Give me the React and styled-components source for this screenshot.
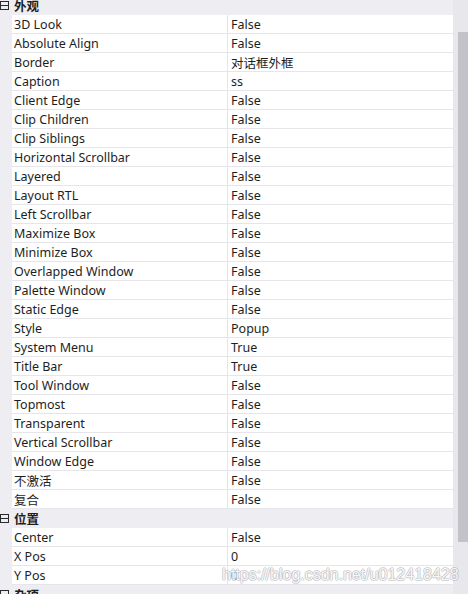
import React from 'react';
import styled, { createGlobalStyle } from 'styled-components';

const GlobalStyle = createGlobalStyle`
    html, body {
        margin: 0;
        padding: 0;
        background: #eeeef2;
        overflow: hidden;
    }
`;

const Frame = styled.div`
    display: flex;
    position: relative;
    width: 468px;
    height: 594px;
    overflow: hidden;
    background: #eeeef2;
    font-family: "Noto Sans", "Noto Sans CJK SC", sans-serif;
    font-size: 12.5px;
    color: #1e1e1e;
`;

const Grid = styled.div`
    flex: 1;
    display: flex;
    flex-direction: column;
    margin-top: -4px;
`;

const CategoryRow = styled.div`
    display: flex;
    align-items: center;
    height: 19px;
    flex: none;
    background: #eeeef2;
`;

const Expander = styled.div`
    display: flex;
    align-items: center;
    width: 14px;
    height: 19px;
`;

const CategoryLabel = styled.span`
    font-family: "Noto Sans CJK SC", sans-serif;
    font-weight: bold;
    font-size: 12.5px;
    line-height: 19px;
`;

const PropRow = styled.div`
    display: grid;
    grid-template-columns: 12px 216px 1fr;
    height: 19px;
    flex: none;
`;

const Margin = styled.div`
    background: #eeeef2;
`;

const Cell = styled.div`
    display: flex;
    align-items: center;
    height: 18px;
    padding-left: ${p => (p.$value ? '3px' : '2px')};
    background: #ffffff;
    border-bottom: 1px solid #e6e6ea;
    border-right: ${p => (p.$value ? 'none' : '1px solid #e6e6ea')};
    white-space: nowrap;
    overflow: hidden;
`;

const Scrollbar = styled.div`
    display: flex;
    justify-content: flex-end;
    width: 15px;
    padding-top: 32px;
    background: #e8e8ec;
`;

const Thumb = styled.div`
    width: 10px;
    height: 510px;
    background: #c2c3c9;
`;

const Watermark = styled.div`
    position: absolute;
    left: 222px;
    top: 566px;
    font-family: "Liberation Sans", Arial, sans-serif;
    font-size: 16px;
    color: rgba(255, 255, 255, 0.9);
    text-shadow:
        1px 0 0 rgba(160, 160, 165, 0.45),
        -1px 0 0 rgba(160, 160, 165, 0.45),
        0 1px 0 rgba(160, 160, 165, 0.45),
        0 -1px 0 rgba(160, 160, 165, 0.45);
    white-space: nowrap;
    pointer-events: none;
`;

const groups = [
    {
        title: '外观',
        props: [
            ['3D Look', 'False'],
            ['Absolute Align', 'False'],
            ['Border', '对话框外框'],
            ['Caption', 'ss'],
            ['Client Edge', 'False'],
            ['Clip Children', 'False'],
            ['Clip Siblings', 'False'],
            ['Horizontal Scrollbar', 'False'],
            ['Layered', 'False'],
            ['Layout RTL', 'False'],
            ['Left Scrollbar', 'False'],
            ['Maximize Box', 'False'],
            ['Minimize Box', 'False'],
            ['Overlapped Window', 'False'],
            ['Palette Window', 'False'],
            ['Static Edge', 'False'],
            ['Style', 'Popup'],
            ['System Menu', 'True'],
            ['Title Bar', 'True'],
            ['Tool Window', 'False'],
            ['Topmost', 'False'],
            ['Transparent', 'False'],
            ['Vertical Scrollbar', 'False'],
            ['Window Edge', 'False'],
            ['不激活', 'False'],
            ['复合', 'False'],
        ],
    },
    {
        title: '位置',
        props: [
            ['Center', 'False'],
            ['X Pos', '0'],
            ['Y Pos', '0'],
        ],
    },
    {
        title: '杂项',
        props: [],
    },
];

function CollapseIcon () {
    return (
        <svg width="10" height="10" viewBox="0 0 10 10">
            <rect x="0.5" y="0.5" width="8" height="8" fill="none" stroke="#2b2b2b" />
            <line x1="1" y1="4.5" x2="8" y2="4.5" stroke="#2b2b2b" />
        </svg>
    );
}

function PropertyGrid () {
    return (
        <Frame>
            <Grid>
                {groups.map(group => (
                    <React.Fragment key={group.title}>
                        <CategoryRow>
                            <Expander><CollapseIcon /></Expander>
                            <CategoryLabel>{group.title}</CategoryLabel>
                        </CategoryRow>
                        {group.props.map(([name, value]) => (
                            <PropRow key={name}>
                                <Margin />
                                <Cell>{name}</Cell>
                                <Cell $value>{value}</Cell>
                            </PropRow>
                        ))}
                    </React.Fragment>
                ))}
            </Grid>
            <Scrollbar>
                <Thumb />
            </Scrollbar>
            <Watermark>https://blog.csdn.net/u012418428</Watermark>
        </Frame>
    );
}

export default function App () {
    return (
        <>
            <GlobalStyle />
            <PropertyGrid />
        </>
    );
}
